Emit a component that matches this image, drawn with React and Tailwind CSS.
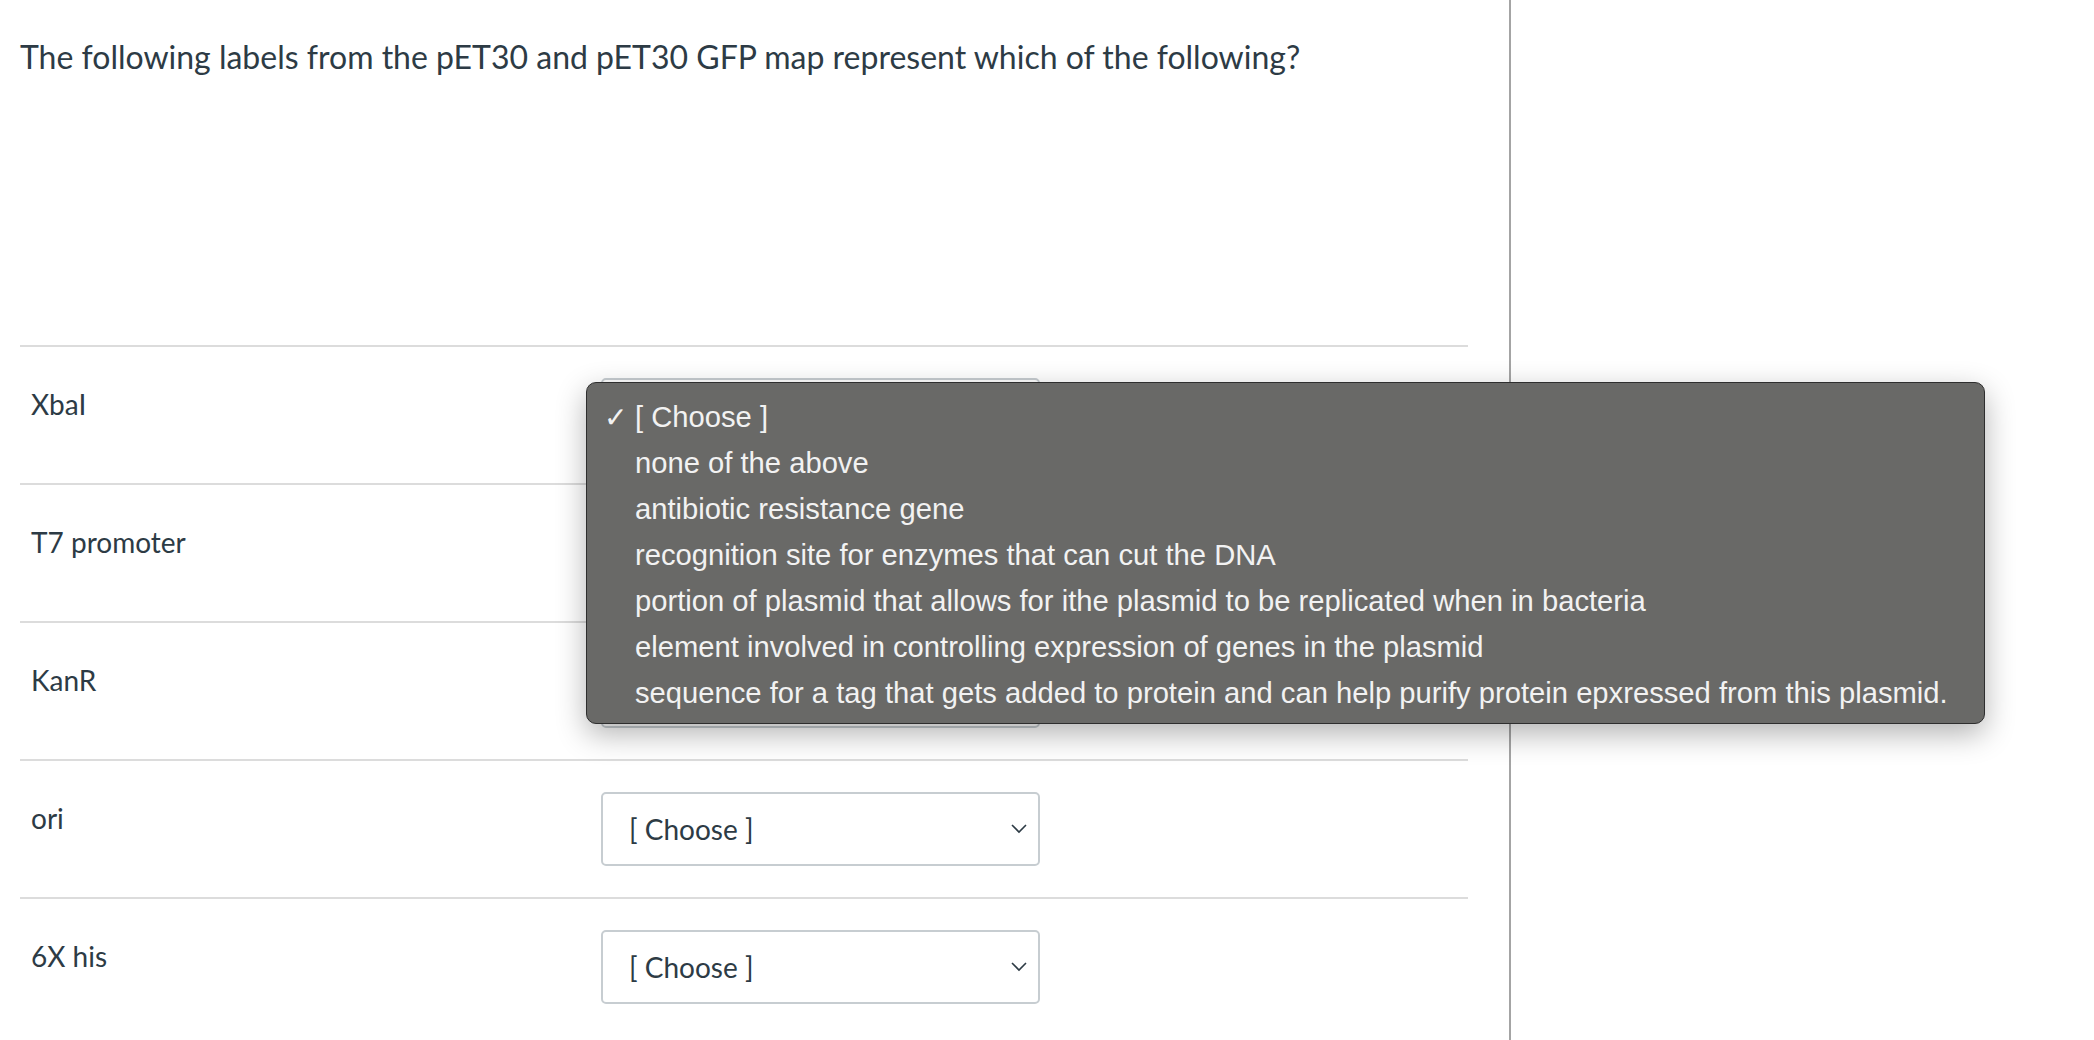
import React from 'react';

const rows = ['XbaI', 'T7 promoter', 'KanR', 'ori', '6X his'];

const options = [
  '[ Choose ]',
  'none of the above',
  'antibiotic resistance gene',
  'recognition site for enzymes that can cut the DNA',
  'portion of plasmid that allows for ithe plasmid to be replicated when in bacteria',
  'element involved in controlling expression of genes in the plasmid',
  'sequence for a tag that gets added to protein and can help purify protein epxressed from this plasmid.',
];

const Chevron = () => (
  <svg width="18" height="12" viewBox="0 0 18 12" fill="none">
    <path d="M2 2l7 7 7-7" stroke="#2d3b45" strokeWidth="1.6" />
  </svg>
);

const App = () => {
  return (
    <div className="relative min-h-screen bg-white font-['Lato',sans-serif] text-[#2d3b45]">
      <div className="w-[1511px] h-[1040px] border-r-2 border-[#a4a4a4] pl-[20px] pr-[41px] overflow-hidden">
        {/* Question text */}
        <div className="pt-[33px] h-[345px]">
          <p className="text-[32px] leading-[48px]">
            The following labels from the pET30 and pET30 GFP map represent which of the following?
          </p>
        </div>

        {/* Matching rows */}
        {rows.map((label) => (
          <div key={label} className="flex border-t-2 border-[#dcdcdc] pt-[31px] pb-[31px]">
            <div className="w-[581px] pl-[11px] pt-[4px] text-[28px] leading-[44px]">{label}</div>
            <div className="w-[439px] h-[74px] flex items-center justify-between border-2 border-[#c7cdd1] rounded-[5px] pl-[26px] pr-[10px] text-[28px]">
              <span>[ Choose ]</span>
              <Chevron />
            </div>
          </div>
        ))}
      </div>

      {/* Open dropdown menu */}
      <div className="absolute left-[586px] top-[382px] w-[1399px] h-[342px] bg-[#696967] border border-[#2e2e2e] rounded-[10px] py-[12px] shadow-[0_10px_30px_rgba(0,0,0,0.3)] font-['Liberation_Sans',sans-serif] text-[#f2f2f2] text-[29.2px]">
        {options.map((opt, i) => (
          <div key={opt} className="flex items-center h-[46px]">
            <span className="w-[48px] pl-[17px] text-[28px]">{i === 0 ? '✓' : ''}</span>
            <span className="whitespace-nowrap">{opt}</span>
          </div>
        ))}
      </div>
    </div>
  );
};

export default App;
